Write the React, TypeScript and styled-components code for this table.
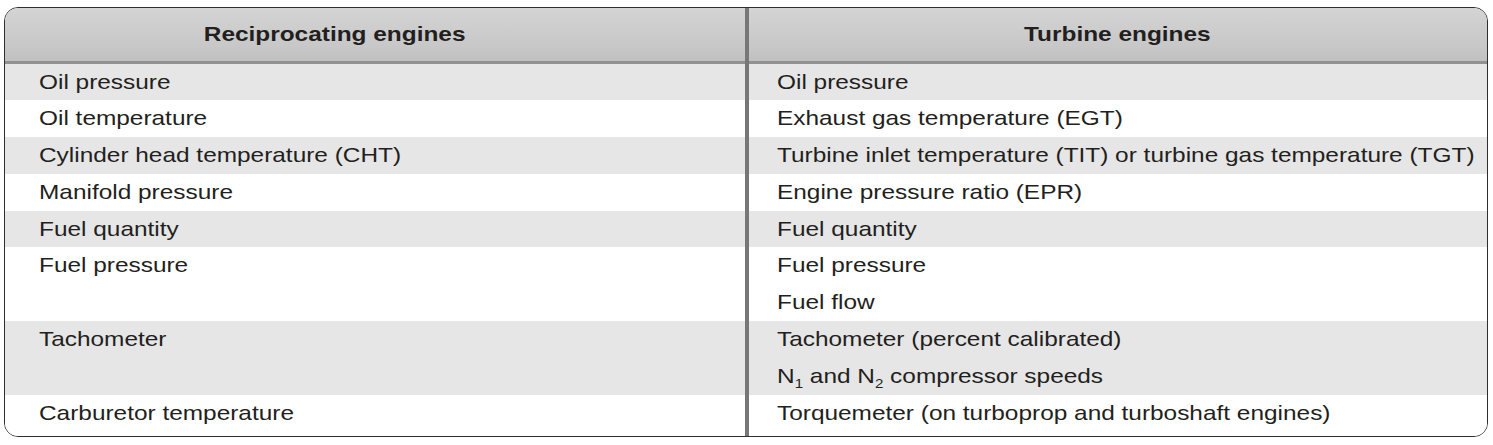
import React from "react";
import styled, { createGlobalStyle } from "styled-components";

const GlobalStyle = createGlobalStyle`
	body {
		margin: 0;
		background: #ffffff;
		font-family: "Liberation Sans", Arial, sans-serif;
		color: #231f20;
	}
`;

const Page = styled.div`
	padding: 6.5px 5px 0 3.5px;
`;

const Frame = styled.div`
	display: grid;
	grid-template-columns: 740px 4px 1fr;
	border: 1.5px solid #2e2e2e;
	border-radius: 14px;
	overflow: hidden;
	background: #ffffff;
`;

const HeaderCell = styled.div<{ $col: number; $shift?: number }>`
	grid-column: ${(p) => p.$col};
	grid-row: 1;
	height: 53px;
	display: flex;
	align-items: center;
	justify-content: center;
	padding-right: ${(p) => p.$shift ?? 0}px;
	background: linear-gradient(#d4d4d4, #c8c8c8 70%, #c0c0c0);
	border-bottom: 3px solid #919191;
	font-weight: bold;
	font-size: 21px;
`;

const Divider = styled.div<{ $span: number }>`
	grid-column: 2;
	grid-row: 1 / span ${(p) => p.$span};
	background: #777777;
	z-index: 1;
`;

const Cell = styled.div<{ $col: number; $row: number; $shade: boolean; $pad: number; $last?: boolean }>`
	grid-column: ${(p) => p.$col};
	grid-row: ${(p) => p.$row};
	background: ${(p) => (p.$shade ? "#e6e6e6" : "#ffffff")};
	padding-left: ${(p) => p.$pad}px;
	padding-bottom: ${(p) => (p.$last ? 5 : 0)}px;
	font-size: 21px;
	display: flex;
	flex-direction: column;
`;

const Line = styled.div`
	height: 36.8px;
	line-height: 36.8px;
	white-space: nowrap;
`;

const Stretch = styled.span<{ $origin?: string }>`
	display: inline-block;
	transform: scaleX(1.162);
	transform-origin: ${(p) => p.$origin ?? "left center"};
`;

const Sub = styled.sub`
	font-size: 13px;
	vertical-align: -5px;
	line-height: 0;
`;

type Row = { left: React.ReactNode[]; right: React.ReactNode[] };

const rows: Row[] = [
	{ left: ["Oil pressure"], right: ["Oil pressure"] },
	{ left: ["Oil temperature"], right: ["Exhaust gas temperature (EGT)"] },
	{ left: ["Cylinder head temperature (CHT)"], right: ["Turbine inlet temperature (TIT) or turbine gas temperature (TGT)"] },
	{ left: ["Manifold pressure"], right: ["Engine pressure ratio (EPR)"] },
	{ left: ["Fuel quantity"], right: ["Fuel quantity"] },
	{ left: ["Fuel pressure"], right: ["Fuel pressure", "Fuel flow"] },
	{
		left: ["Tachometer"],
		right: [
			"Tachometer (percent calibrated)",
			<>N<Sub>1</Sub> and N<Sub>2</Sub> compressor speeds</>,
		],
	},
	{ left: ["Carburetor temperature"], right: ["Torquemeter (on turboprop and turboshaft engines)"] },
];

export default function App() {
	return <>
		<GlobalStyle/>
		<Page>
			<Frame>
				<HeaderCell $col={1} $shift={80}>
					<Stretch $origin="center">Reciprocating engines</Stretch>
				</HeaderCell>
				<HeaderCell $col={3}>
					<Stretch $origin="center">Turbine engines</Stretch>
				</HeaderCell>
				{rows.map((row, i) => {
					const shade = i % 2 === 0;
					const last = i === rows.length - 1;
					return <React.Fragment key={i}>
						<Cell $col={1} $row={i + 2} $shade={shade} $pad={34} $last={last}>
							{row.left.map((t, j) => <Line key={j}><Stretch>{t}</Stretch></Line>)}
						</Cell>
						<Cell $col={3} $row={i + 2} $shade={shade} $pad={28} $last={last}>
							{row.right.map((t, j) => <Line key={j}><Stretch>{t}</Stretch></Line>)}
						</Cell>
					</React.Fragment>;
				})}
				<Divider $span={rows.length + 1}/>
			</Frame>
		</Page>
	</>;
}
